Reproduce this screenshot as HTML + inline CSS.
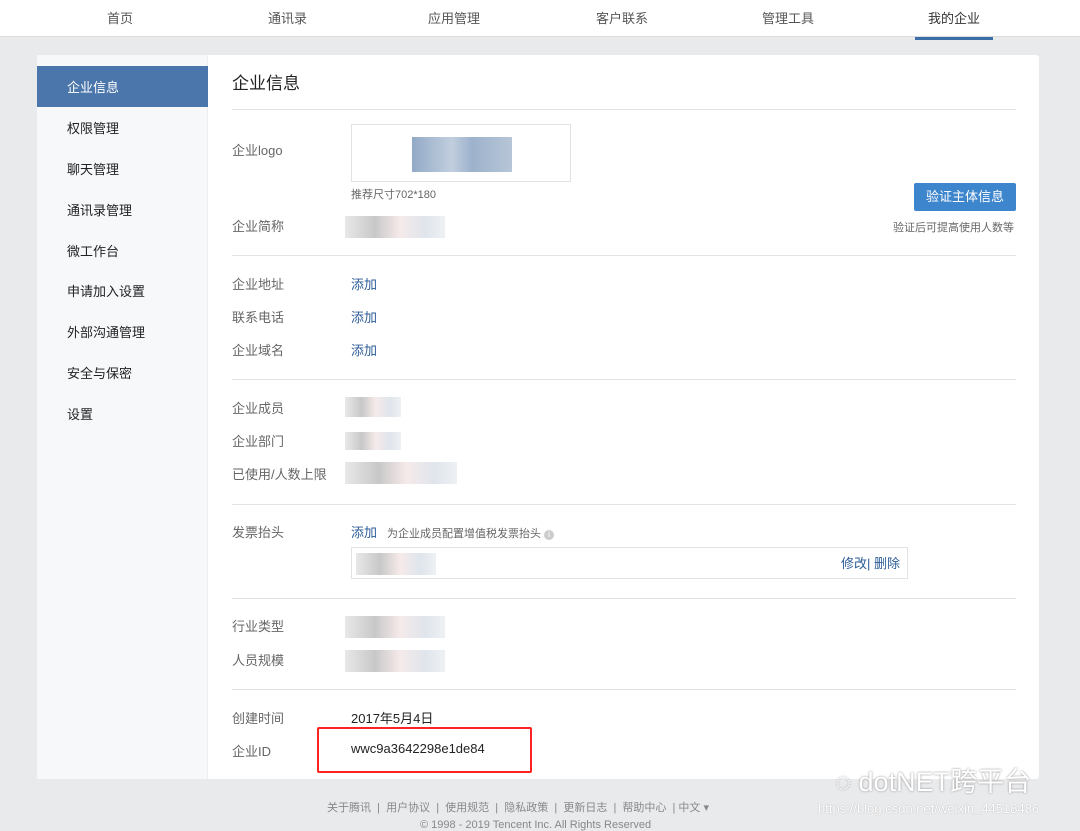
<!DOCTYPE html>
<html><head><meta charset="utf-8">
<style>
*{margin:0;padding:0;box-sizing:border-box}
body{width:1080px;height:829px;overflow:hidden;background:#e9eaec;font-family:"Liberation Sans","Noto Sans CJK SC",sans-serif;font-size:13px;color:#333;position:relative}
.hdr{position:absolute;left:0;top:0;width:1080px;height:37px;background:#fff;border-bottom:1px solid #dcdcdc}
.hdr span{position:absolute;top:8px;font-size:13px;color:#555}
.hdr .act{border-bottom:3px solid #3b6ea5;color:#333;padding:0 13px 10px}
.card{position:absolute;left:37px;top:55px;width:1002px;height:724px;background:#fff;border-radius:3px}
.side{position:absolute;left:37px;top:55px;width:171px;height:724px;background:#f7f8fa;border-right:1px solid #eee}
.side div{position:absolute;left:30px;font-size:13px;color:#222;margin-top:-2px}
.side .on{left:0;width:171px;height:41px;background:#4a76ac;color:#fff;padding:11px 30px;margin-top:0}
.t,.v,.a{margin-top:-3px}
.t{position:absolute;font-size:13px;color:#666}
.v{position:absolute;font-size:13px;color:#222}
.a{position:absolute;font-size:13px;color:#2c5c98}
.hr{position:absolute;left:232px;width:784px;height:1px;background:#e3e3e3}
.blur{position:absolute;background:linear-gradient(90deg,#e8e8e8,#c8c8c8 30%,#f6eaea 55%,#dfe5ec 80%,#eef1f4)}
</style></head><body>
<div class="hdr">
<span style="left:107px">首页</span>
<span style="left:268px">通讯录</span>
<span style="left:428px">应用管理</span>
<span style="left:596px">客户联系</span>
<span style="left:762px">管理工具</span>
<span class="act" style="left:915px">我的企业</span>
</div>
<div class="card"></div>
<div class="side">
<div class="on" style="top:11px">企业信息</div>
<div style="top:65px">权限管理</div>
<div style="top:106px">聊天管理</div>
<div style="top:147px">通讯录管理</div>
<div style="top:188px">微工作台</div>
<div style="top:228px">申请加入设置</div>
<div style="top:269px">外部沟通管理</div>
<div style="top:310px">安全与保密</div>
<div style="top:351px">设置</div>
</div>
<div class="v" style="left:232px;top:72px;font-size:17px">企业信息</div>
<div class="hr" style="top:109px"></div>
<div class="t" style="left:232px;top:143px">企业logo</div>
<div style="position:absolute;left:351px;top:124px;width:220px;height:58px;border:1px solid #e3e3e3"></div>
<div style="position:absolute;left:412px;top:137px;width:100px;height:35px;background:linear-gradient(90deg,#7f9bbd,#b6c6d8 40%,#8ba4c3 60%,#aabcd0);opacity:.85"></div>
<div class="t" style="left:351px;top:189px;font-size:11px">推荐尺寸702*180</div>
<div style="position:absolute;left:914px;top:183px;width:102px;height:28px;background:#3d85cc;border-radius:2px;color:#fff;font-size:13px;text-align:center;line-height:28px">验证主体信息</div>
<div class="t" style="left:893px;top:222px;font-size:11px">验证后可提高使用人数等</div>
<div class="t" style="left:232px;top:219px">企业简称</div>
<div class="blur" style="left:345px;top:216px;width:100px;height:22px"></div>
<div class="hr" style="top:255px"></div>
<div class="t" style="left:232px;top:277px">企业地址</div><div class="a" style="left:351px;top:277px">添加</div>
<div class="t" style="left:232px;top:310px">联系电话</div><div class="a" style="left:351px;top:310px">添加</div>
<div class="t" style="left:232px;top:343px">企业域名</div><div class="a" style="left:351px;top:343px">添加</div>
<div class="hr" style="top:379px"></div>
<div class="t" style="left:232px;top:401px">企业成员</div><div class="blur" style="left:345px;top:397px;width:56px;height:20px"></div>
<div class="t" style="left:232px;top:434px">企业部门</div><div class="blur" style="left:345px;top:432px;width:56px;height:18px"></div>
<div class="t" style="left:232px;top:467px">已使用/人数上限</div><div class="blur" style="left:345px;top:462px;width:112px;height:22px"></div>
<div class="hr" style="top:504px"></div>
<div class="t" style="left:232px;top:525px">发票抬头</div>
<div class="a" style="left:351px;top:525px">添加</div>
<div class="t" style="left:387px;top:528px;font-size:11px">为企业成员配置增值税发票抬头 <span style="display:inline-block;width:10px;height:10px;border-radius:50%;background:#ccc;color:#fff;font-size:8px;text-align:center;line-height:10px">i</span></div>
<div style="position:absolute;left:351px;top:547px;width:557px;height:32px;border:1px solid #e3e3e3"></div>
<div class="blur" style="left:356px;top:553px;width:80px;height:22px"></div>
<div class="a" style="left:841px;top:556px">修改| 删除</div>
<div class="hr" style="top:598px"></div>
<div class="t" style="left:232px;top:619px">行业类型</div><div class="blur" style="left:345px;top:616px;width:100px;height:22px"></div>
<div class="t" style="left:232px;top:653px">人员规模</div><div class="blur" style="left:345px;top:650px;width:100px;height:22px"></div>
<div class="hr" style="top:689px"></div>
<div class="t" style="left:232px;top:711px">创建时间</div><div class="v" style="left:351px;top:711px">2017年5月4日</div>
<div class="t" style="left:232px;top:744px">企业ID</div><div class="v" style="left:351px;top:744px">wwc9a3642298e1de84</div>
<div style="position:absolute;left:317px;top:727px;width:215px;height:46px;border:2px solid #f22;border-radius:2px"></div>
<div style="position:absolute;left:327px;top:799px;font-size:11px;color:#888">关于腾讯 &nbsp;| &nbsp;用户协议 &nbsp;| &nbsp;使用规范 &nbsp;| &nbsp;隐私政策 &nbsp;| &nbsp;更新日志 &nbsp;| &nbsp;帮助中心 &nbsp;| 中文 ▾</div>
<div style="position:absolute;left:420px;top:819px;font-size:11px;color:#888">© 1998 - 2019 Tencent Inc. All Rights Reserved</div>
<div style="position:absolute;left:835px;top:760px;font-size:27px;color:#fff;text-shadow:0 0 2px #888">◌ dotNET跨平台</div>
<div style="position:absolute;left:818px;top:801px;font-size:13px;color:#fff;text-shadow:0 0 1px #999">https://blog.csdn.net/weixin_44518486</div>
</body></html>
